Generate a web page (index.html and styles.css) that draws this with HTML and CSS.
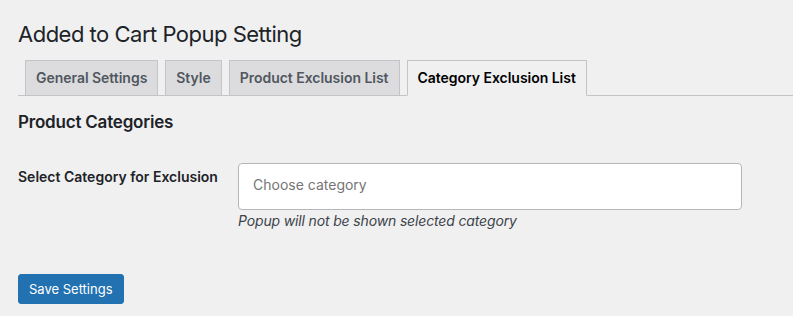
FILE: index.html
```html
<!DOCTYPE html>
<html>
<head>
    <meta charset="UTF-8">
    <title>Added to Cart Popup Setting</title>
    <link rel="stylesheet" href="styles.css">
</head>
<body>
    <div class="wrap">
        <h1 class="page-title">Added to Cart Popup Setting</h1>
        <div class="nav-tab-wrapper">
            <a class="nav-tab" href="#">General Settings</a>
            <a class="nav-tab" href="#">Style</a>
            <a class="nav-tab" href="#">Product Exclusion List</a>
            <a class="nav-tab nav-tab-active" href="#">Category Exclusion List</a>
        </div>
        <form class="settings-form">
            <h2 class="section-title">Product Categories</h2>
            <table class="form-table">
                <tr>
                    <th>Select Category for Exclusion</th>
                    <td>
                        <div class="choose-box">Choose category</div>
                        <p class="description">Popup will not be shown selected category</p>
                    </td>
                </tr>
            </table>
            <p class="submit">
                <button class="button-primary" type="button">Save Settings</button>
            </p>
        </form>
    </div>
</body>
</html>
```

FILE: styles.css
```css
*{
    margin: 0;
    padding: 0;
    box-sizing: border-box;
}
html,body{
    width: 100%;
    height: 100%;
}
body{
    background-color: #f0f0f1;
    color: #1d2327;
    font-family: Inter, "Noto Sans", sans-serif;
    font-size: 14px;
    line-height: 1.4;
}
.wrap{
    padding: 19px 0 0 18px;
}
.page-title{
    font-size: 22px;
    font-weight: 400;
    letter-spacing: -0.5px;
    line-height: 30px;
    margin-bottom: 11px;
}
.nav-tab-wrapper{
    display: flex;
    border-bottom: 1px solid #c3c4c7;
    padding-left: 7px;
}
.nav-tab{
    display: block;
    margin-right: 7px;
    margin-bottom: -1px;
    padding: 5px 10px;
    line-height: 24px;
    font-size: 14px;
    font-weight: 600;
    letter-spacing: -0.03px;
    color: #50575e;
    text-decoration: none;
    background-color: #dcdcde;
    border: 1px solid #c3c4c7;
}
.nav-tab-active{
    background-color: #f0f0f1;
    color: #000000;
    border-bottom-color: #f0f0f1;
}
.section-title{
    font-size: 17px;
    font-weight: 600;
    letter-spacing: -0.2px;
    line-height: 24px;
    margin-top: 14px;
}
.form-table{
    border-collapse: collapse;
    margin-top: 14px;
}
.form-table th{
    width: 220px;
    padding: 20px 10px 20px 0;
    text-align: left;
    vertical-align: top;
    font-weight: 600;
    line-height: 18px;
}
.form-table td{
    padding: 15px 0;
    vertical-align: top;
}
.choose-box{
    width: 504px;
    height: 47px;
    padding: 0 14px;
    line-height: 41px;
    font-size: 14px;
    color: #757575;
    background-color: #ffffff;
    border: 1px solid #b4b6b9;
    border-radius: 4px;
}
.description{
    font-style: italic;
    color: #3c434a;
    letter-spacing: -0.15px;
    line-height: 21px;
    margin-top: 0;
}
.submit{
    padding-top: 28px;
}
.button-primary{
    height: 30px;
    padding: 0 10px;
    font-family: Inter, "Noto Sans", sans-serif;
    font-size: 13px;
    color: #ffffff;
    background-color: #2271b1;
    border: 1px solid #2271b1;
    border-radius: 3px;
}
```
